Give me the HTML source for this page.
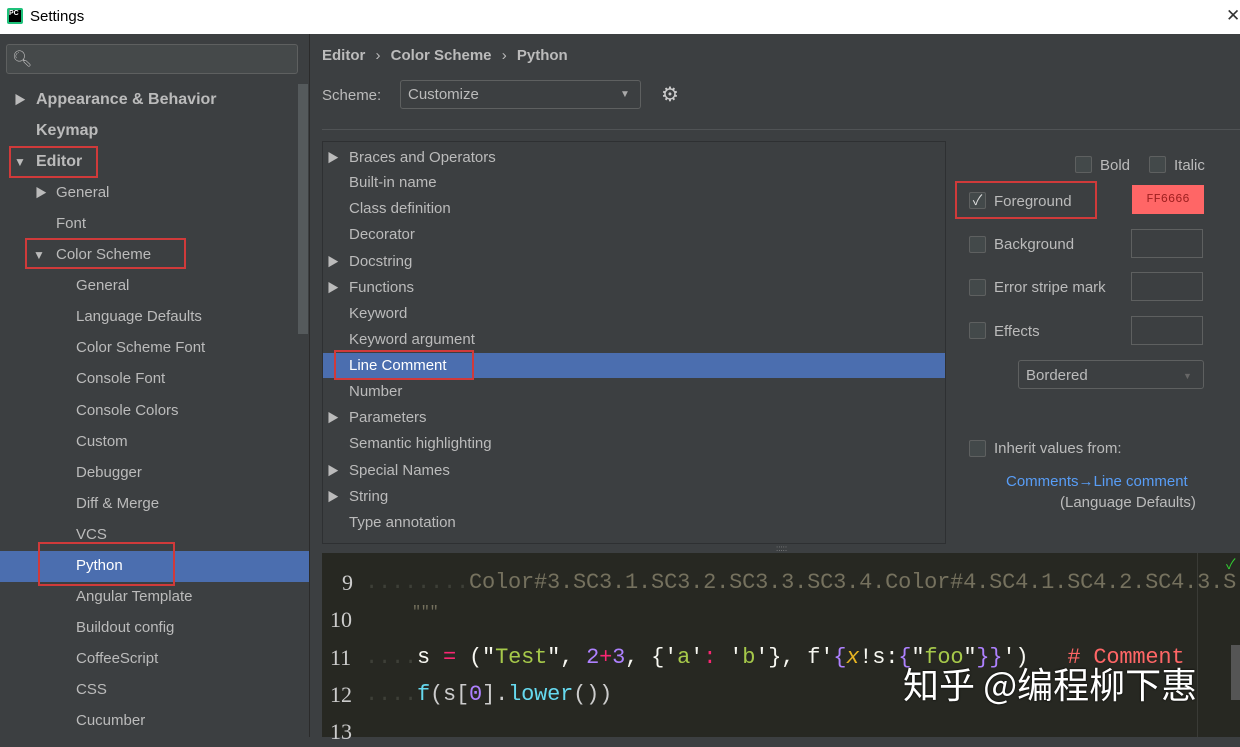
<!DOCTYPE html>
<html><head><meta charset="utf-8"><style>
*{margin:0;padding:0;box-sizing:border-box}
body{width:1240px;height:737px;overflow:hidden;background:#3c3f41;font-family:"Liberation Sans","Noto Sans CJK SC",sans-serif;font-size:15px;color:#bbbbbb;position:relative}
.a{position:absolute;white-space:nowrap}
.t{line-height:20px;margin-top:1px}
.b{font-weight:bold}
.red{position:absolute;border:2px solid #d03a3a}
.cb{position:absolute;width:17px;height:17px;border:1px solid #5e6060;background:#43494a;border-radius:2px}
.sw{position:absolute;width:72px;height:29px;border:1px solid #5e6060}
.ln{font-family:"Liberation Serif","DejaVu Serif",serif;font-size:22px;line-height:30px;color:#ccc}
.mono{font-family:"Liberation Mono","DejaVu Sans Mono",monospace;font-size:22px;line-height:30px;letter-spacing:-0.2px}
</style></head><body>
<div class="a" style="left:0;top:0;width:1240px;height:34px;background:#fff"></div>
<div class="a" style="left:7px;top:8px;width:16px;height:16px;background:#1ec17a;border-radius:2px"><div style="position:absolute;left:2px;top:2px;width:12px;height:12px;background:#000;color:#fff;font-size:7px;font-weight:bold;line-height:8px">PC</div></div>
<div class="a t" style="left:30px;top:6px;color:#000;font-size:15px">Settings</div>
<div class="a" style="left:1226px;top:6px;color:#333;font-size:17px">✕</div>
<!-- sidebar -->
<div class="a" style="left:6px;top:44px;width:292px;height:30px;border:1px solid #5e6060;border-radius:3px;background:#45494a"></div>
<div class="a" style="left:12px;top:49px;color:#bbb;font-size:16px">🔍︎</div>
<div class="a" style="left:298px;top:84px;width:10px;height:250px;background:#555a5c"></div>
<div class="a" style="left:309px;top:34px;width:1px;height:703px;background:#2b2b2b"></div>
<div class="a" style="left:0;top:551px;width:309px;height:31px;background:#4b6eaf"></div>
<div class="a t b" style="left:14px;top:89px;font-size:12px">▶</div>
<div class="a t b" style="left:36px;top:89px;font-size:16px">Appearance &amp; Behavior</div>
<div class="a t b" style="left:36px;top:120px;font-size:16px">Keymap</div>
<div class="a t b" style="left:14px;top:151px;font-size:12px">▼</div>
<div class="a t b" style="left:36px;top:151px;font-size:16px">Editor</div>
<div class="red" style="left:9px;top:146px;width:89px;height:32px"></div>
<div class="a t" style="left:35px;top:182px;font-size:12px">▶</div>
<div class="a t" style="left:56px;top:182px">General</div>
<div class="a t" style="left:56px;top:213px">Font</div>
<div class="a t" style="left:33px;top:244px;font-size:12px">▼</div>
<div class="a t" style="left:56px;top:244px">Color Scheme</div>
<div class="red" style="left:25px;top:238px;width:161px;height:31px"></div>
<div class="a t" style="left:76px;top:275px">General</div>
<div class="a t" style="left:76px;top:306px">Language Defaults</div>
<div class="a t" style="left:76px;top:337px">Color Scheme Font</div>
<div class="a t" style="left:76px;top:368px">Console Font</div>
<div class="a t" style="left:76px;top:400px">Console Colors</div>
<div class="a t" style="left:76px;top:431px">Custom</div>
<div class="a t" style="left:76px;top:462px">Debugger</div>
<div class="a t" style="left:76px;top:493px">Diff &amp; Merge</div>
<div class="a t" style="left:76px;top:524px">VCS</div>
<div class="a t" style="left:76px;top:555px;color:#fff">Python</div>
<div class="red" style="left:38px;top:542px;width:137px;height:44px"></div>
<div class="a t" style="left:76px;top:586px">Angular Template</div>
<div class="a t" style="left:76px;top:617px">Buildout config</div>
<div class="a t" style="left:76px;top:648px">CoffeeScript</div>
<div class="a t" style="left:76px;top:679px">CSS</div>
<div class="a t" style="left:76px;top:710px">Cucumber</div>
<!-- header -->
<div class="a t b" style="left:322px;top:45px">Editor <span style="font-weight:normal;margin:0 6px">›</span> Color Scheme <span style="font-weight:normal;margin:0 6px">›</span> Python</div>
<div class="a t" style="left:322px;top:85px">Scheme:</div>
<div class="a" style="left:400px;top:80px;width:241px;height:29px;border:1px solid #5e6060;border-radius:3px;background:#3c3f41"></div>
<div class="a t" style="left:408px;top:84px">Customize</div>
<div class="a t" style="left:620px;top:84px;font-size:10px;color:#aaa">▼</div>
<div class="a" style="left:661px;top:82px;font-size:20px;color:#ccc">⚙</div>
<div class="a" style="left:322px;top:129px;width:918px;height:1px;background:#505355"></div>
<!-- list -->
<div class="a" style="left:322px;top:141px;width:624px;height:403px;border:1px solid #2e3032;background:#3c3f41"></div>
<div class="a" style="left:323px;top:353px;width:622px;height:25px;background:#4b6eaf"></div>
<div class="a t" style="left:327px;top:147px;font-size:12px">▶</div><div class="a t" style="left:349px;top:147px">Braces and Operators</div>
<div class="a t" style="left:349px;top:172px">Built-in name</div>
<div class="a t" style="left:349px;top:198px">Class definition</div>
<div class="a t" style="left:349px;top:224px">Decorator</div>
<div class="a t" style="left:327px;top:251px;font-size:12px">▶</div><div class="a t" style="left:349px;top:251px">Docstring</div>
<div class="a t" style="left:327px;top:277px;font-size:12px">▶</div><div class="a t" style="left:349px;top:277px">Functions</div>
<div class="a t" style="left:349px;top:303px">Keyword</div>
<div class="a t" style="left:349px;top:329px">Keyword argument</div>
<div class="a t" style="left:349px;top:355px;color:#fff">Line Comment</div>
<div class="red" style="left:334px;top:350px;width:140px;height:30px"></div>
<div class="a t" style="left:349px;top:381px">Number</div>
<div class="a t" style="left:327px;top:407px;font-size:12px">▶</div><div class="a t" style="left:349px;top:407px">Parameters</div>
<div class="a t" style="left:349px;top:433px">Semantic highlighting</div>
<div class="a t" style="left:327px;top:460px;font-size:12px">▶</div><div class="a t" style="left:349px;top:460px">Special Names</div>
<div class="a t" style="left:327px;top:486px;font-size:12px">▶</div><div class="a t" style="left:349px;top:486px">String</div>
<div class="a t" style="left:349px;top:512px">Type annotation</div>
<!-- right options -->
<div class="cb" style="left:1075px;top:156px"></div><div class="a t" style="left:1100px;top:155px">Bold</div>
<div class="cb" style="left:1149px;top:156px"></div><div class="a t" style="left:1174px;top:155px">Italic</div>
<div class="cb" style="left:969px;top:192px;color:#ddd;font-size:14px;line-height:15px;text-align:center">✓</div><div class="a t" style="left:994px;top:191px">Foreground</div>
<div class="red" style="left:955px;top:181px;width:142px;height:38px"></div>
<div class="a" style="left:1132px;top:185px;width:72px;height:29px;background:#ff6666;color:#a02020;font-family:'Liberation Mono',monospace;font-size:12px;text-align:center;line-height:29px">FF6666</div>
<div class="cb" style="left:969px;top:236px"></div><div class="a t" style="left:994px;top:234px">Background</div>
<div class="sw" style="left:1131px;top:229px"></div>
<div class="cb" style="left:969px;top:279px"></div><div class="a t" style="left:994px;top:277px">Error stripe mark</div>
<div class="sw" style="left:1131px;top:272px"></div>
<div class="cb" style="left:969px;top:322px"></div><div class="a t" style="left:994px;top:321px">Effects</div>
<div class="sw" style="left:1131px;top:316px"></div>
<div class="a" style="left:1018px;top:360px;width:186px;height:29px;border:1px solid #5e6060;border-radius:3px"></div>
<div class="a t" style="left:1026px;top:365px">Bordered</div>
<div class="a t" style="left:1183px;top:365px;font-size:9px;color:#666">▼</div>
<div class="cb" style="left:969px;top:440px"></div><div class="a t" style="left:994px;top:438px">Inherit values from:</div>
<div class="a t" style="left:1006px;top:471px;color:#589df6">Comments→Line comment</div>
<div class="a t" style="left:1060px;top:492px">(Language Defaults)</div>
<!-- editor -->
<div class="a" style="left:776px;top:544px;font-size:8px;color:#888">:::::</div>
<div class="a" style="left:322px;top:553px;width:918px;height:184px;background:#272822"></div>
<div class="a" style="left:1197px;top:553px;width:1px;height:184px;background:#3a3b36"></div>
<div class="a" style="left:1231px;top:645px;width:9px;height:55px;background:#555"></div>
<div class="a" style="left:1226px;top:554px;color:#3c3;font-size:14px">✓</div>
<div class="a ln" style="left:342px;top:568px">9</div>
<div class="a ln" style="left:330px;top:605px">10</div>
<div class="a ln" style="left:330px;top:643px">11</div>
<div class="a ln" style="left:330px;top:680px">12</div>
<div class="a ln" style="left:330px;top:717px">13</div>
<div class="a mono" style="left:365px;top:568px;color:#75715e"><span style="color:#3e3f38">........</span>Color#3.SC3.1.SC3.2.SC3.3.SC3.4.Color#4.SC4.1.SC4.2.SC4.3.S</div>
<div class="a mono" style="left:412px;top:598px;color:#75715e;font-size:15px">"""</div>
<div class="a mono" style="left:365px;top:643px;color:#f8f8f2"><span style="color:#3e3f38">....</span>s <span style="color:#f92672">=</span> ("<span style="color:#a6c94a">Test</span>", <span style="color:#ae81ff">2</span><span style="color:#f92672">+</span><span style="color:#ae81ff">3</span>, {'<span style="color:#a6c94a">a</span>'<span style="color:#f92672">:</span> '<span style="color:#a6c94a">b</span>'}, f'<span style="color:#ae81ff">{</span><span style="color:#e6b422;font-style:italic">x</span>!s:<span style="color:#ae81ff">{</span>"<span style="color:#a6c94a">foo</span>"<span style="color:#ae81ff">}}</span>')&nbsp;&nbsp;&nbsp;<span style="color:#ff6666">#&nbsp;Comment</span></div>
<div class="a mono" style="left:365px;top:680px;color:#ccc"><span style="color:#3e3f38">....</span><span style="color:#66d9ef">f</span>(s[<span style="color:#ae81ff">0</span>].<span style="color:#66d9ef">lower</span>())</div>
<div class="a" style="left:903px;top:660px;font-family:'Noto Sans CJK SC',sans-serif;font-size:36px;color:#fff;line-height:46px;text-shadow:0 0 2px #000">知乎 @编程柳下惠</div>
</body></html>
